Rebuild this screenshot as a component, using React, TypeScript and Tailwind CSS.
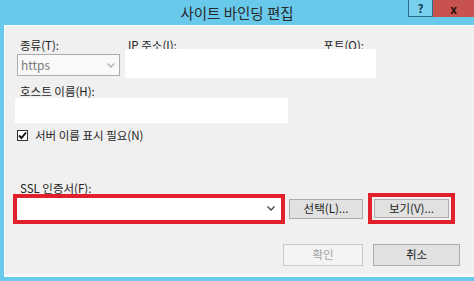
import React from "react";

const font = { fontFamily: '"Noto Sans CJK KR", "Noto Sans", sans-serif' };

function Chevron({ color = "#606060" }: { color?: string }) {
  return (
    <svg width="8" height="5" viewBox="0 0 8 5">
      <path d="M0.5 0.5 L4 4 L7.5 0.5" fill="none" stroke={color} strokeWidth="1.3" />
    </svg>
  );
}

export default function App() {
  return (
    <div
      className="w-[474px] h-[281px] bg-[#69c9eb] flex flex-col pl-[4px] pb-[4px] overflow-hidden text-[#1e1e1e]"
      style={font}
    >
      {/* title bar */}
      <div className="h-[25px] relative flex items-center justify-center -ml-[4px]">
        <span className="text-[14.5px] leading-[15px] text-[#2a2a2a] -mt-[1px]">사이트 바인딩 편집</span>
        <div className="absolute right-0 top-0 flex">
          <div className="w-[25px] h-[17px] border border-t-0 border-[#2d6a86] bg-[#79d0ee] flex items-center justify-center text-[11px] font-bold text-[#10304a] leading-none">
            ?
          </div>
          <div className="w-[41px] h-[17px] bg-[#c8524d] flex items-center justify-center text-[12px] font-bold text-[#2a1010] leading-none">
            x
          </div>
        </div>
      </div>

      {/* content */}
      <div className="flex-1 bg-[#f0f0f0] border-t border-l border-white border-b-[3px] border-b-[#f9f9f9] flex flex-col text-[11.5px]">
        {/* row 1 */}
        <div className="flex pt-[13px] pl-[12px]">
          <div className="w-[103px] flex flex-col">
            <span className="leading-[12px] pl-[3px]">종류(T):</span>
            <div className="mt-[3px] h-[22px] border border-[#acacac] bg-[#f9f9f9] flex items-center justify-between pl-[3px] pr-[4px]">
              <span className="text-[#7a7a7a] text-[12px]">https</span>
              <Chevron color="#b0b0b0" />
            </div>
          </div>
          <div className="w-[251px] ml-[5px] flex flex-col">
            <div className="flex leading-[12px]">
              <span className="pl-[3px]">IP 주소(I):</span>
              <span className="ml-auto mr-[12px]">포트(O):</span>
            </div>
            <div className="-mt-[2px] h-[29px] bg-white" />
          </div>
        </div>

        {/* host */}
        <div className="flex flex-col pl-[10px] mt-[7px]">
          <span className="leading-[12px] pl-[5px]">호스트 이름(H):</span>
          <div className="mt-[1px] w-[273px] h-[25px] bg-white" />
        </div>

        {/* checkbox */}
        <div className="flex items-center pl-[12px] mt-[6px]">
          <div className="w-[11px] h-[11px] border border-[#333333] bg-white flex items-center justify-center">
            <svg width="9" height="9" viewBox="0 0 9 9">
              <path d="M1 4.5 L3.5 7 L8 1.5" fill="none" stroke="#111" strokeWidth="1.9" />
            </svg>
          </div>
          <span className="ml-[7px] leading-[12px]">서버 이름 표시 필요(N)</span>
        </div>

        {/* ssl */}
        <span className="mt-[41px] pl-[15px] leading-[12px]">SSL 인증서(F):</span>
        <div className="flex items-center pl-[8px] -mt-[1px]">
          <div className="w-[272px] h-[30px] border-[4px] border-[#e2202b] bg-white flex items-center justify-end pr-[6px]">
            <Chevron color="#404040" />
          </div>
          <div className="ml-[4px] w-[74px] h-[20px] bg-[#e1e1e1] border border-[#adadad] flex items-center justify-center">
            선택(L)...
          </div>
          <div className="ml-[5px] w-[87px] h-[31px] border-[4px] border-[#e2202b] p-[2px]">
            <div className="w-full h-full bg-[#e1e1e1] border border-[#adadad] flex items-center justify-center">
              보기(V)...
            </div>
          </div>
        </div>

        {/* bottom buttons */}
        <div className="flex justify-end pr-[14px] mt-[20px]">
          <div className="w-[80px] h-[22px] bg-[#f4f4f4] border border-[#c8c8c8] text-[#a3a3a3] flex items-center justify-center">
            확인
          </div>
          <div className="ml-[10px] w-[87px] h-[22px] bg-[#e1e1e1] border border-[#adadad] flex items-center justify-center">
            취소
          </div>
        </div>
      </div>
    </div>
  );
}
